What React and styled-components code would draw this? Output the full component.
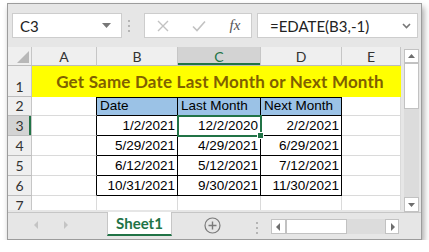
import React from 'react';
import styled, { createGlobalStyle } from 'styled-components';

const GREEN = '#217346';

const Global = createGlobalStyle`
  html, body {
    margin: 0;
    background: #fff;
    font-family: Lato, "Liberation Sans", sans-serif;
  }
`;

const Frame = styled.div`
  padding: 3px 0 0 7px;
`;

const Window = styled.div`
  width: 415px;
  height: 237px;
  box-sizing: border-box;
  border: 1px solid #9c9c9c;
  background: #e6e6e6;
  box-shadow: 2px 4px 6px rgba(0, 0, 0, 0.35);
  display: flex;
  flex-direction: column;
  overflow: hidden;
`;

const FormulaBar = styled.div`
  height: 43px;
  flex: none;
  display: flex;
  align-items: center;
  padding: 0 3px 0 4px;
`;

const Field = styled.div`
  height: 25px;
  box-sizing: border-box;
  background: #fff;
  border: 1px solid #cdcdcd;
  display: flex;
  align-items: center;
  font-size: 15px;
  color: #222;
`;

const NameBox = styled(Field)`
  width: 110px;
  justify-content: space-between;
  padding: 0 10px 0 7px;
`;

const Grip = styled.div`
  display: flex;
  flex-direction: column;
  gap: 3px;
  margin: ${p => p.$top || 0}px ${p => p.$right || 14}px 0 ${p => p.$left || 6}px;
  span {
    width: 2px;
    height: 2px;
    background: #b4b4b4;
  }
`;

const ButtonBox = styled(Field)`
  width: 108px;
  display: grid;
  grid-template-columns: repeat(3, 36px);
  justify-items: center;
`;

const Fx = styled.span`
  font-family: "Liberation Serif", serif;
  font-style: italic;
  font-size: 15px;
  color: #555;
`;

const FormulaInput = styled(Field)`
  flex: 1;
  margin-left: 5px;
  padding: 0 6px 0 12px;
  justify-content: space-between;
`;

const Body = styled.div`
  display: flex;
  flex: none;
`;

const Sheet = styled.div`
  display: grid;
  grid-template-columns: 24px 65px 81px 83px 81px 59px;
  grid-template-rows: 19px 31px 19px 20px 20px 20px 20px 20px;
  height: 163px;
  background: #fff;
  overflow: hidden;
`;

const Head = styled.div`
  box-sizing: border-box;
  background: ${p => (p.$active ? '#d3d3d3' : '#efefef')};
  border-right: 1px solid #c6c6c6;
  border-bottom: 1px solid #bcbcbc;
  color: ${p => (p.$active ? GREEN : '#333')};
  font-size: 14px;
  display: flex;
  justify-content: center;
  align-items: center;
  position: relative;
  ${p => p.$active && `box-shadow: inset 0 -2px 0 ${GREEN};`}
`;

const RowHead = styled(Head)`
  align-items: flex-end;
  padding-bottom: 1px;
  color: #333;
  ${p => p.$active && `box-shadow: inset -2px 0 0 ${GREEN};`}
`;

const Corner = styled(Head)`
  align-items: flex-end;
  justify-content: flex-end;
  padding: 0 2px 2px 0;
`;

const Cell = styled.div`
  box-sizing: border-box;
  border-right: 1px solid ${p => (p.$dark || p.$edge ? '#000' : '#dadada')};
  border-bottom: 1px solid ${p => (p.$dark ? '#000' : '#dadada')};
  ${p => p.$top && 'border-top: 1px solid #000;'}
  background: ${p => p.$bg || '#fff'};
  font-family: "Liberation Sans", Arial, sans-serif;
  font-size: 13.5px;
  color: #000;
  display: flex;
  align-items: flex-end;
  justify-content: ${p => (p.$left ? 'flex-start' : 'flex-end')};
  padding: 0 2px 2px 3px;
  white-space: nowrap;
  position: relative;
  ${p =>
    p.$selected &&
    `
    outline: 2px solid ${GREEN};
    outline-offset: -1px;
    z-index: 2;
    &::after {
      content: '';
      position: absolute;
      right: -4px;
      bottom: -4px;
      width: 5px;
      height: 5px;
      background: ${GREEN};
      border: 1px solid #fff;
    }
  `}
`;

const Title = styled.div`
  grid-column: span 5;
  background: #ffff00;
  color: #7f6000;
  font-weight: 700;
  font-size: 17px;
  letter-spacing: 0.2px;
  display: flex;
  align-items: center;
  justify-content: center;
  padding-left: 7px;
`;

const VScroll = styled.div`
  width: 19px;
  box-sizing: border-box;
  padding: 2px 1px 0 3px;
  display: flex;
  flex-direction: column;
`;

const ScrollBtn = styled.div`
  width: ${p => p.$w || 15}px;
  height: ${p => p.$h || 15}px;
  box-sizing: border-box;
  background: #fff;
  border: 1px solid #c2c2c2;
  display: flex;
  align-items: center;
  justify-content: center;
  flex: none;
`;

const Track = styled.div`
  flex: 1;
  height: 15px;
  background: #dcdcdc;
`;

const VTrack = styled.div`
  width: 15px;
  height: 88px;
  background: #dcdcdc;
`;

const TabBar = styled.div`
  flex: 1;
  border-top: 1px solid #c6c6c6;
  display: flex;
  align-items: flex-start;
`;

const Nav = styled.div`
  width: 99px;
  height: 24px;
  display: flex;
  align-items: center;
  padding-left: 25px;
  gap: 22px;
  box-sizing: border-box;
`;

const Tab = styled.div`
  width: 65px;
  height: 24px;
  margin-top: -1px;
  box-sizing: border-box;
  background: #fff;
  border-left: 1px solid #c6c6c6;
  border-right: 1px solid #c6c6c6;
  border-bottom: 2px solid ${GREEN};
  color: ${GREEN};
  font-weight: 700;
  font-size: 15px;
  display: flex;
  align-items: center;
  justify-content: center;
`;

const AddSheet = styled.div`
  width: 82px;
  height: 24px;
  display: flex;
  align-items: center;
  padding-left: 32px;
  box-sizing: border-box;
`;

const HScroll = styled.div`
  display: flex;
  align-items: center;
  margin-top: 6px;
  width: 128px;
`;

const Tri = ({ dir, color = '#6e6e6e', size = 7 }) => {
  const pts = {
    up: '0,6 7,6 3.5,2',
    down: '0,2 7,2 3.5,6',
    left: '5,0 5,8 1,4',
    right: '2,0 2,8 6,4',
  }[dir];
  return (
    <svg width={size} height={size + 1} viewBox="0 0 7 8">
      <polygon points={pts} fill={color} />
    </svg>
  );
};

const rows = [
  ['1/2/2021', '12/2/2020', '2/2/2021'],
  ['5/29/2021', '4/29/2021', '6/29/2021'],
  ['6/12/2021', '5/12/2021', '7/12/2021'],
  ['10/31/2021', '9/30/2021', '11/30/2021'],
];

export default function App() {
  return (
    <Frame>
      <Global />
      <Window>
        <FormulaBar>
          <NameBox>
            <span>C3</span>
            <svg width="9" height="6" viewBox="0 0 9 6">
              <polygon points="0,0 9,0 4.5,5" fill="#777" />
            </svg>
          </NameBox>
          <Grip>
            <span />
            <span />
            <span />
          </Grip>
          <ButtonBox>
            <svg width="12" height="12" viewBox="0 0 12 12">
              <path d="M1 1L11 11M11 1L1 11" stroke="#c2c2c2" strokeWidth="1.4" />
            </svg>
            <svg width="14" height="12" viewBox="0 0 14 12">
              <path d="M1 6.5L5 10.5L13 1.5" stroke="#c2c2c2" strokeWidth="1.6" fill="none" />
            </svg>
            <Fx>fx</Fx>
          </ButtonBox>
          <FormulaInput>
            <span>=EDATE(B3,-1)</span>
            <svg width="9" height="6" viewBox="0 0 9 6">
              <path d="M1 1L4.5 4.5L8 1" stroke="#777" strokeWidth="1.6" fill="none" />
            </svg>
          </FormulaInput>
        </FormulaBar>

        <Body>
          <Sheet>
            <Corner>
              <svg width="12" height="12" viewBox="0 0 12 12">
                <polygon points="12,0 12,12 0,12" fill="#b8b8b8" />
              </svg>
            </Corner>
            <Head>A</Head>
            <Head>B</Head>
            <Head $active>C</Head>
            <Head>D</Head>
            <Head>E</Head>

            <RowHead>1</RowHead>
            <Title>Get Same Date Last Month or Next Month</Title>

            <RowHead>2</RowHead>
            <Cell $edge />
            <Cell $dark $top $left $bg="#9bc2e6">Date</Cell>
            <Cell $dark $top $left $bg="#9bc2e6">Last Month</Cell>
            <Cell $dark $top $left $bg="#9bc2e6">Next Month</Cell>
            <Cell />

            {rows.map((r, i) => (
              <React.Fragment key={i}>
                <RowHead $active={i === 0}>{i + 3}</RowHead>
                <Cell $edge />
                <Cell $dark>{r[0]}</Cell>
                <Cell $dark $selected={i === 0}>{r[1]}</Cell>
                <Cell $dark>{r[2]}</Cell>
                <Cell />
              </React.Fragment>
            ))}

            <RowHead>7</RowHead>
            <Cell />
            <Cell />
            <Cell />
            <Cell />
            <Cell />
          </Sheet>
          <VScroll>
            <ScrollBtn $h={14}>
              <Tri dir="up" />
            </ScrollBtn>
            <ScrollBtn $h={46} />
            <VTrack />
            <ScrollBtn>
              <Tri dir="down" />
            </ScrollBtn>
          </VScroll>
        </Body>

        <TabBar>
          <Nav>
            <Tri dir="left" color="#c4c4c4" />
            <Tri dir="right" color="#c4c4c4" />
          </Nav>
          <Tab>Sheet1</Tab>
          <AddSheet>
            <svg width="17" height="17" viewBox="0 0 17 17">
              <circle cx="8.5" cy="8.5" r="7.5" stroke="#7a7a7a" strokeWidth="1.2" fill="none" />
              <path d="M8.5 4.5V12.5M4.5 8.5H12.5" stroke="#7a7a7a" strokeWidth="1.4" />
            </svg>
          </AddSheet>
          <Grip $left={2} $right={13} $top={9}>
            <span />
            <span />
            <span />
          </Grip>
          <HScroll>
            <ScrollBtn>
              <Tri dir="left" />
            </ScrollBtn>
            <ScrollBtn $w={61} />
            <Track />
            <ScrollBtn $w={14}>
              <Tri dir="right" />
            </ScrollBtn>
          </HScroll>
        </TabBar>
      </Window>
    </Frame>
  );
}
